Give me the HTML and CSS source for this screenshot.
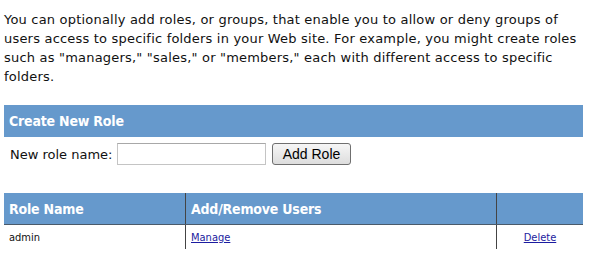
FILE: index.html
```html
<!DOCTYPE html>
<html>
<head>
<meta charset="utf-8">
<link rel="stylesheet" href="styles.css">
</head>
<body>
<p class="intro">You can optionally add roles, or groups, that enable you to allow or deny groups of users access to specific folders in your Web site. For example, you might create roles such as "managers," "sales," or "members," each with different access to specific folders.</p>
<div class="bar">Create New Role</div>
<div class="form-row">
  <label class="label" for="role">New role name:</label>
  <input class="field" id="role" type="text">
  <button class="btn" type="button">Add Role</button>
</div>
<table class="roles">
  <thead>
    <tr>
      <th class="c1">Role Name</th>
      <th class="c2">Add/Remove Users</th>
      <th class="c3"></th>
    </tr>
  </thead>
  <tbody>
    <tr>
      <td class="c1">admin</td>
      <td class="c2"><a href="#">Manage</a></td>
      <td class="c3 center"><a href="#">Delete</a></td>
    </tr>
  </tbody>
</table>
</body>
</html>
```
FILE: styles.css
```css
html, body {
  margin: 0;
  padding: 0;
  background: #ffffff;
}
body {
  padding: 0 12px 0 4px;
  font-family: "DejaVu Sans", Verdana, sans-serif;
  color: #111;
}
.intro {
  margin: 0;
  padding-top: 10px;
  font-size: 13px;
  line-height: 19px;
  letter-spacing: 0.2px;
  width: 579px;
}
.bar {
  margin-top: 19px;
  width: 574px;
  height: 32px;
  line-height: 32px;
  padding-left: 5px;
  background: #6699cc;
  color: #fff;
  font-family: "DejaVu Sans Condensed", "DejaVu Sans", sans-serif;
  font-weight: bold;
  font-size: 14px;
  letter-spacing: -0.2px;
}
.form-row {
  display: flex;
  align-items: center;
  margin-top: 6px;
  height: 22px;
  padding-left: 6px;
}
.label {
  font-size: 13px;
  width: 107px;
}
.field {
  box-sizing: border-box;
  width: 149px;
  height: 22px;
  margin: 0;
  border: 1px solid #c4c4c4;
  border-top-color: #a8a8a8;
  background: #fff;
}
.btn {
  box-sizing: border-box;
  margin: 0 0 0 6px;
  width: 79px;
  height: 22px;
  padding: 0;
  border: 1px solid #6f6f6f;
  border-radius: 3px;
  background: linear-gradient(#f6f6f6, #dddddd);
  font-family: "Liberation Sans", Arial, sans-serif;
  font-size: 14px;
  color: #000;
}
.roles {
  margin-top: 28px;
  width: 579px;
  border-collapse: collapse;
  table-layout: fixed;
  font-family: "DejaVu Sans Condensed", "DejaVu Sans", sans-serif;
}
.roles th {
  background: #6699cc;
  color: #fff;
  font-size: 14px;
  font-weight: bold;
  text-align: left;
  height: 31px;
  padding: 0 0 0 5px;
  border-bottom: 1px solid #4a5a6a;
  letter-spacing: -0.2px;
}
.roles td {
  font-size: 11px;
  height: 24px;
  padding: 0 0 0 5px;
}
.roles .c1 { width: 176px; }
.roles .c2 { width: 305px; border-left: 1px solid #444; }
.roles .c3 { border-left: 1px solid #444; }
.roles td.center { text-align: center; padding: 0; }
.roles a {
  color: #1c1ca0;
  text-decoration: underline;
}
```
